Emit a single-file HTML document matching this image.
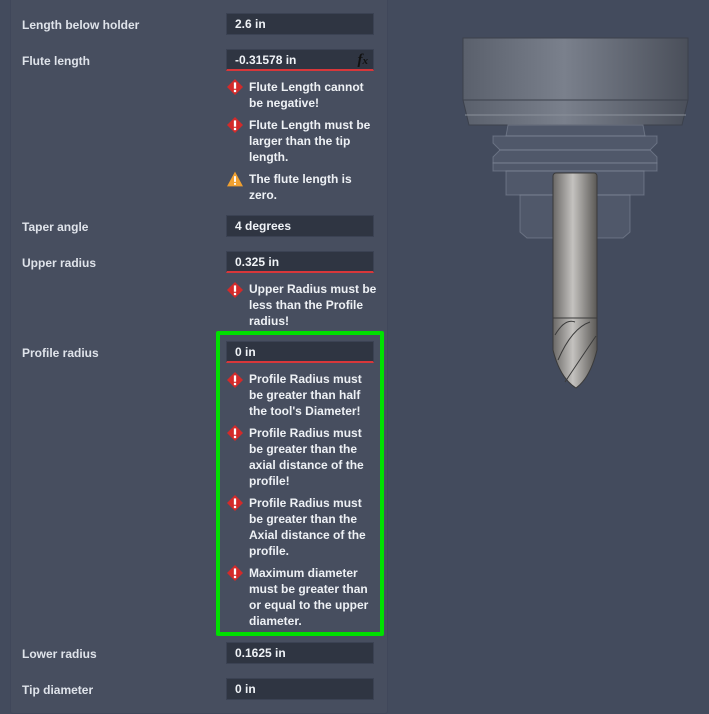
<!DOCTYPE html>
<html><head><style>
body{margin:0;width:709px;height:714px;background:#434b5d;position:relative;overflow:hidden;font-family:"Liberation Sans",sans-serif;font-size:12px;color:#e8ecf2}
.panel{position:absolute;left:10px;top:-4px;width:376px;height:716px;background:#474e5f;border-radius:3px;border:1px solid #40475a}
.lbl{position:absolute;left:22px;font-weight:bold;color:#dfe3ea;font-size:12px}
.inp{position:absolute;left:226px;width:148px;height:22px;background:#2f3542;border:1px solid #3b4253;box-sizing:border-box;padding-left:8px;line-height:21px;font-weight:bold;color:#f0f3f7}
.inp.err{border-bottom:2px solid #d8373a}
.msg{position:absolute;left:249px;width:130px;line-height:16px;font-weight:bold;color:#eef1f5}
.ic{position:absolute;left:227px;width:16px;height:16px}
.green{position:absolute;left:216px;top:331px;width:160px;height:297px;border:4px solid #00e000;border-radius:2px}
</style></head><body>
<div class="panel"></div>
<div class="lbl" style="top:18px">Length below holder</div>
<div class="inp" style="top:13px">2.6 in</div>
<div class="lbl" style="top:54px">Flute length</div>
<div class="inp err" style="top:49px">-0.31578 in<span style="position:absolute;right:5px;top:0;font-style:italic;font-family:'Liberation Serif',serif;font-size:15px;color:#111">f<span style="font-size:11px">x</span></span></div>

<svg class="ic" style="top:79px" viewBox="0 0 14 14"><path d="M7 0L14 7L7 14L0 7Z" fill="#d32a2a"/><rect x="6" y="3" width="2" height="5.5" fill="#fff"/><rect x="6" y="9.5" width="2" height="2" fill="#fff"/></svg>
<div class="msg" style="top:79px">Flute Length cannot be negative!</div>
<svg class="ic" style="top:117px" viewBox="0 0 14 14"><path d="M7 0L14 7L7 14L0 7Z" fill="#d32a2a"/><rect x="6" y="3" width="2" height="5.5" fill="#fff"/><rect x="6" y="9.5" width="2" height="2" fill="#fff"/></svg>
<div class="msg" style="top:117px">Flute Length must be larger than the tip length.</div>
<svg class="ic" style="top:171px" viewBox="0 0 14 14"><path d="M7 0.5L14 13.5H0Z" fill="#f0a030"/><rect x="6.2" y="4.5" width="1.6" height="5" fill="#fff"/><rect x="6.2" y="10.5" width="1.6" height="1.6" fill="#fff"/></svg>
<div class="msg" style="top:171px">The flute length is zero.</div>

<div class="lbl" style="top:220px">Taper angle</div>
<div class="inp" style="top:215px">4 degrees</div>
<div class="lbl" style="top:256px">Upper radius</div>
<div class="inp err" style="top:251px">0.325 in</div>
<svg class="ic" style="top:282px" viewBox="0 0 14 14"><path d="M7 0L14 7L7 14L0 7Z" fill="#d32a2a"/><rect x="6" y="3" width="2" height="5.5" fill="#fff"/><rect x="6" y="9.5" width="2" height="2" fill="#fff"/></svg>
<div class="msg" style="top:281px">Upper Radius must be less than the Profile radius!</div>

<div class="green"></div>
<div class="lbl" style="top:346px">Profile radius</div>
<div class="inp err" style="top:341px">0 in</div>
<svg class="ic" style="top:372px" viewBox="0 0 14 14"><path d="M7 0L14 7L7 14L0 7Z" fill="#d32a2a"/><rect x="6" y="3" width="2" height="5.5" fill="#fff"/><rect x="6" y="9.5" width="2" height="2" fill="#fff"/></svg>
<div class="msg" style="top:371px">Profile Radius must be greater than half the tool's Diameter!</div>
<svg class="ic" style="top:425px" viewBox="0 0 14 14"><path d="M7 0L14 7L7 14L0 7Z" fill="#d32a2a"/><rect x="6" y="3" width="2" height="5.5" fill="#fff"/><rect x="6" y="9.5" width="2" height="2" fill="#fff"/></svg>
<div class="msg" style="top:425px">Profile Radius must be greater than the axial distance of the profile!</div>
<svg class="ic" style="top:495px" viewBox="0 0 14 14"><path d="M7 0L14 7L7 14L0 7Z" fill="#d32a2a"/><rect x="6" y="3" width="2" height="5.5" fill="#fff"/><rect x="6" y="9.5" width="2" height="2" fill="#fff"/></svg>
<div class="msg" style="top:495px">Profile Radius must be greater than the Axial distance of the profile.</div>
<svg class="ic" style="top:565px" viewBox="0 0 14 14"><path d="M7 0L14 7L7 14L0 7Z" fill="#d32a2a"/><rect x="6" y="3" width="2" height="5.5" fill="#fff"/><rect x="6" y="9.5" width="2" height="2" fill="#fff"/></svg>
<div class="msg" style="top:565px">Maximum diameter must be greater than or equal to the upper diameter.</div>

<div class="lbl" style="top:647px">Lower radius</div>
<div class="inp" style="top:642px">0.1625 in</div>
<div class="lbl" style="top:683px">Tip diameter</div>
<div class="inp" style="top:678px">0 in</div>

<svg style="position:absolute;left:0;top:0" width="709" height="714">
<defs>
<linearGradient id="h" x1="0" x2="1"><stop offset="0" stop-color="#5a606c"/><stop offset="0.45" stop-color="#7a808c"/><stop offset="1" stop-color="#4a4f5a"/></linearGradient>
<linearGradient id="s" x1="0" x2="1"><stop offset="0" stop-color="#6a6866"/><stop offset="0.45" stop-color="#c4c2bf"/><stop offset="1" stop-color="#5a5855"/></linearGradient>
</defs>
<rect x="463" y="38" width="225" height="62" fill="url(#h)" stroke="#3c414c"/>
<path d="M463 100H688L682 125H469Z" fill="url(#h)" stroke="#3c414c"/>
<line x1="465" y1="115" x2="686" y2="115" stroke="#8a909a" stroke-width="1"/>
<g fill="#6a7284" fill-opacity="0.35" stroke="#8a92a2" stroke-opacity="0.5">
<path d="M508 125H643L645 136H506Z"/>
<path d="M493 136H657V143L650 150H500L493 143Z"/>
<path d="M500 150H650L657 157V163H493V157Z"/>
<rect x="493" y="163" width="164" height="8"/>
<rect x="506" y="171" width="138" height="24"/>
<path d="M520 195H630V232L623 238H527L520 232Z"/>
</g>
<rect x="553" y="173" width="44" height="172" rx="3" fill="url(#s)" stroke="#3a3a3a"/>
<path d="M553 318H597V350Q590 378 576 388Q560 378 553 350Z" fill="url(#s)" stroke="#3a3a3a"/>
<g stroke="#3a3a3a" fill="none" stroke-width="1"><path d="M555 335Q565 318 575 322"/><path d="M558 360Q572 328 590 322"/><path d="M565 382Q585 352 596 336"/></g>
</svg>
</body></html>
